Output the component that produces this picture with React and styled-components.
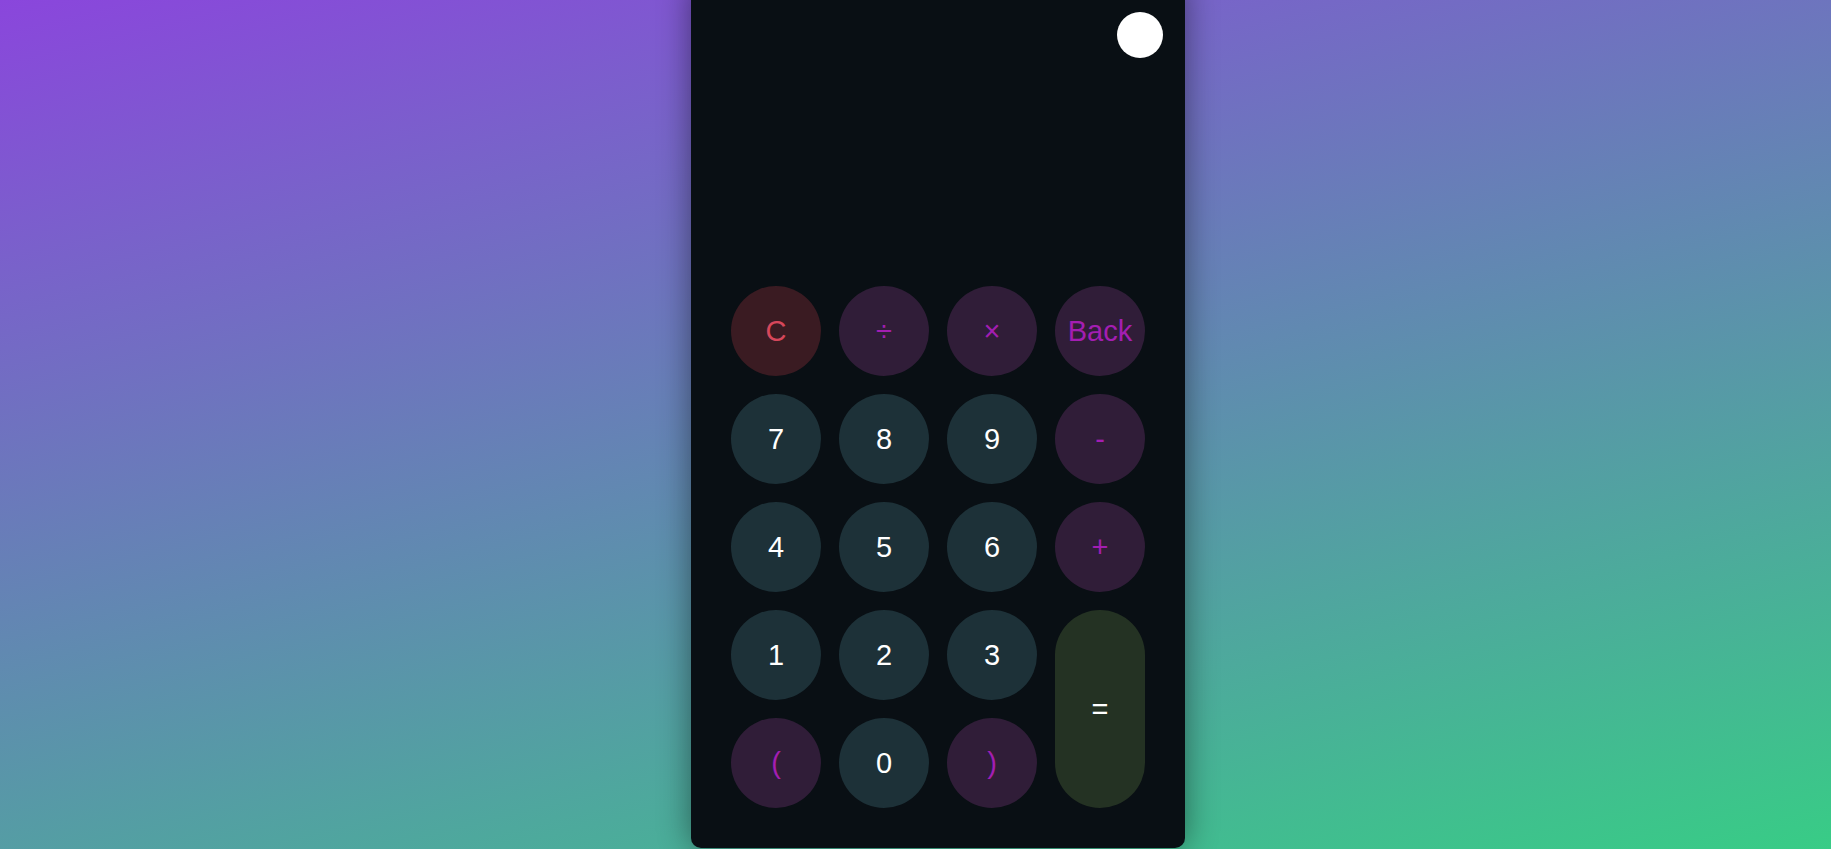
import React from "react";
import styled, { createGlobalStyle } from "styled-components";

const Global = createGlobalStyle`
  html, body {
    margin: 0;
    padding: 0;
    height: 100%;
    overflow: hidden;
  }
  body {
    font-family: "Liberation Sans", Arial, sans-serif;
    background: linear-gradient(166deg, #8a46dc 0%, #38cc86 100%);
  }
`;

const Page = styled.div`
  height: 100vh;
  box-sizing: border-box;
  display: flex;
  justify-content: center;
  align-items: flex-end;
  padding: 0 0 1px 45px;
`;

const Card = styled.div`
  position: relative;
  flex-shrink: 0;
  width: 494px;
  box-sizing: border-box;
  padding: 40px;
  background: #090f14;
  border-radius: 10px;
  box-shadow: 0 0 32px rgba(0, 0, 0, 0.45);
  display: flex;
  flex-direction: column;
`;

const Screen = styled.div`
  height: 266px;
  display: flex;
  flex-direction: column;
  justify-content: flex-end;
  align-items: flex-end;
  color: #fff;
`;

const Toggle = styled.button`
  position: absolute;
  top: 32px;
  right: 22px;
  width: 46px;
  height: 46px;
  border-radius: 50%;
  border: none;
  padding: 0;
  background: #ffffff;
`;

const Keypad = styled.div`
  display: grid;
  grid-template-columns: repeat(4, 90px);
  grid-auto-rows: 90px;
  gap: 18px;
`;

const palette = {
  num: { bg: "#1d3138", fg: "#ffffff" },
  op: { bg: "#301d38", fg: "#a31eb2" },
  clear: { bg: "#3a1b22", fg: "#d6475b" },
  equal: { bg: "#243223", fg: "#ffffff" },
};

const Key = styled.button`
  border: none;
  padding: 0;
  margin: 0;
  border-radius: 45px;
  font-family: "Liberation Sans", Arial, sans-serif;
  font-size: 29px;
  line-height: 1;
  display: flex;
  align-items: center;
  justify-content: center;
  background: ${(p) => palette[p.$kind].bg};
  color: ${(p) => palette[p.$kind].fg};
  grid-row: ${(p) => (p.$tall ? "span 2" : "auto")};
  cursor: pointer;
`;

const keys = [
  { label: "C", kind: "clear" },
  { label: "÷", kind: "op" },
  { label: "×", kind: "op" },
  { label: "Back", kind: "op" },
  { label: "7", kind: "num" },
  { label: "8", kind: "num" },
  { label: "9", kind: "num" },
  { label: "-", kind: "op" },
  { label: "4", kind: "num" },
  { label: "5", kind: "num" },
  { label: "6", kind: "num" },
  { label: "+", kind: "op" },
  { label: "1", kind: "num" },
  { label: "2", kind: "num" },
  { label: "3", kind: "num" },
  { label: "=", kind: "equal", tall: true },
  { label: "(", kind: "op" },
  { label: "0", kind: "num" },
  { label: ")", kind: "op" },
];

export default function App() {
  return (
    <>
      <Global />
      <Page>
        <Card>
          <Toggle aria-label="toggle theme" />
          <Screen />
          <Keypad>
            {keys.map((k) => (
              <Key key={k.label} $kind={k.kind} $tall={k.tall}>
                {k.label}
              </Key>
            ))}
          </Keypad>
        </Card>
      </Page>
    </>
  );
}
